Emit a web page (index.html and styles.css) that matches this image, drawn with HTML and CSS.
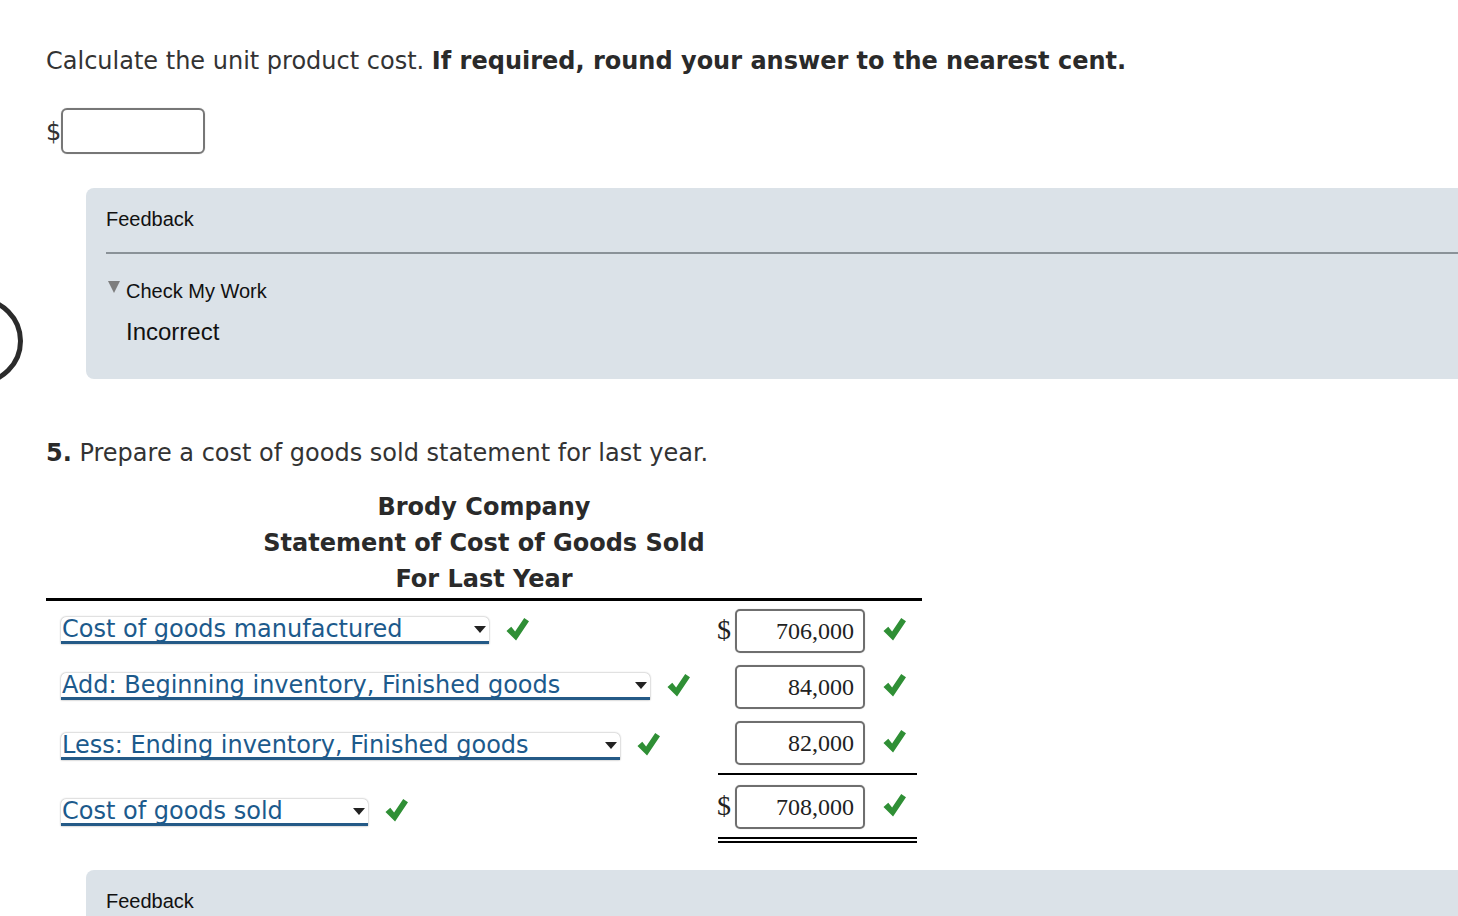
FILE: index.html
```html
<!DOCTYPE html>
<html>
<head>
<meta charset="utf-8">
<link rel="stylesheet" href="styles.css">
</head>
<body>
<div class="ring"></div>
<div class="page">
  <p class="question">Calculate the unit product cost. <b>If required, round your answer to the nearest cent.</b></p>
  <div class="answer-row"><span class="cur">$</span><span class="blank-input"></span></div>

  <div class="feedback">
    <div class="fb-title">Feedback</div>
    <div class="fb-rule"></div>
    <div class="fb-check"><span class="tri"></span>Check My Work</div>
    <div class="fb-result">Incorrect</div>
  </div>

  <p class="question q5"><b>5.</b> Prepare a cost of goods sold statement for last year.</p>
  <div class="stmt-head">
    <div>Brody Company</div>
    <div>Statement of Cost of Goods Sold</div>
    <div>For Last Year</div>
  </div>
  <div class="stmt">
    <div class="thick-rule"></div>
    <div class="row r1">
      <div class="label"><div class="select w1"><span>Cost of goods manufactured</span><i class="arrow"></i></div><svg class="check" viewBox="0 0 24 26"><path d="M0.5 14.5 L5.5 10 L9.5 15 L19 1 L24 4.5 L10.5 24.5 Z"/></svg></div>
      <div class="dollar">$</div>
      <div class="num">706,000</div>
      <div class="chk"><svg class="check" viewBox="0 0 24 26"><path d="M0.5 14.5 L5.5 10 L9.5 15 L19 1 L24 4.5 L10.5 24.5 Z"/></svg></div>
    </div>
    <div class="row r2">
      <div class="label"><div class="select w2"><span>Add: Beginning inventory, Finished goods</span><i class="arrow"></i></div><svg class="check" viewBox="0 0 24 26"><path d="M0.5 14.5 L5.5 10 L9.5 15 L19 1 L24 4.5 L10.5 24.5 Z"/></svg></div>
      <div class="dollar"></div>
      <div class="num">84,000</div>
      <div class="chk"><svg class="check" viewBox="0 0 24 26"><path d="M0.5 14.5 L5.5 10 L9.5 15 L19 1 L24 4.5 L10.5 24.5 Z"/></svg></div>
    </div>
    <div class="row r3">
      <div class="label"><div class="select w3"><span>Less: Ending inventory, Finished goods</span><i class="arrow"></i></div><svg class="check" viewBox="0 0 24 26"><path d="M0.5 14.5 L5.5 10 L9.5 15 L19 1 L24 4.5 L10.5 24.5 Z"/></svg></div>
      <div class="dollar"></div>
      <div class="num">82,000</div>
      <div class="chk"><svg class="check" viewBox="0 0 24 26"><path d="M0.5 14.5 L5.5 10 L9.5 15 L19 1 L24 4.5 L10.5 24.5 Z"/></svg></div>
    </div>
    <div class="sub-rule"></div>
    <div class="row r4">
      <div class="label"><div class="select w4"><span>Cost of goods sold</span><i class="arrow"></i></div><svg class="check" viewBox="0 0 24 26"><path d="M0.5 14.5 L5.5 10 L9.5 15 L19 1 L24 4.5 L10.5 24.5 Z"/></svg></div>
      <div class="dollar">$</div>
      <div class="num">708,000</div>
      <div class="chk"><svg class="check" viewBox="0 0 24 26"><path d="M0.5 14.5 L5.5 10 L9.5 15 L19 1 L24 4.5 L10.5 24.5 Z"/></svg></div>
    </div>
    <div class="double-rule"></div>
  </div>

  <div class="feedback fb2">
    <div class="fb-title">Feedback</div>
  </div>
</div>
</body>
</html>
```

FILE: styles.css
```css
html, body {
  margin: 0;
  padding: 0;
  background: #fff;
  overflow: hidden;
}
body {
  width: 1458px;
  height: 916px;
  position: relative;
  font-family: "DejaVu Sans", Verdana, sans-serif;
  color: #333;
}
.ring {
  position: absolute;
  left: -65px;
  top: 297px;
  width: 78px;
  height: 78px;
  border: 5px solid #2b2b2b;
  border-radius: 50%;
}
.page {
  padding: 43px 0 0 46px;
}
.question {
  margin: 0;
  font-size: 24px;
  line-height: 36px;
}
.question b {
  color: #2a2a2a;
}
.answer-row {
  margin-top: 29px;
  display: flex;
  align-items: center;
  height: 45px;
}
.cur {
  font-size: 24px;
  line-height: 32px;
  color: #333;
  width: 15px;
  margin-top: 3px;
}
.blank-input {
  display: block;
  box-sizing: border-box;
  width: 144px;
  height: 46px;
  border: 2px solid #777;
  border-radius: 6px;
  box-shadow: 0 0 1px rgba(0,0,0,0.3);
}
.feedback {
  margin: 35px 0 0 40px;
  background: #dbe2e8;
  border-radius: 8px 0 0 8px;
  padding: 19px 0 0 20px;
  height: 191px;
  box-sizing: border-box;
  font-family: "Liberation Sans", Arial, sans-serif;
  color: #111;
}
.fb-title {
  font-size: 20px;
  line-height: 24px;
}
.fb-rule {
  margin-top: 21px;
  height: 2px;
  background: #8a9298;
}
.fb-check {
  margin-top: 25px;
  font-size: 20px;
  line-height: 24px;
  display: flex;
  align-items: center;
}
.tri {
  display: inline-block;
  width: 0;
  height: 0;
  border-left: 6px solid transparent;
  border-right: 6px solid transparent;
  border-top: 12px solid #7d7d7d;
  margin: -8px 6px 0 2px;
}
.fb-result {
  margin: 14px 0 0 20px;
  font-size: 24px;
  line-height: 30px;
}
.q5 {
  margin-top: 56px;
}
.stmt-head {
  margin-top: 18px;
  width: 876px;
  text-align: center;
  font-weight: bold;
  font-size: 24px;
  line-height: 36px;
  color: #2a2a2a;
}
.stmt {
  width: 876px;
}
.thick-rule {
  margin-top: 1px;
  height: 3px;
  background: #000;
}
.row {
  display: grid;
  grid-template-columns: 672px 17px 130px 1fr;
  align-items: center;
  height: 44px;
  margin-top: 12px;
}
.stmt .thick-rule + .row {
  margin-top: 8px;
}
.label {
  display: flex;
  align-items: center;
  padding-left: 15px;
}
.select {
  position: relative;
  height: 24px;
  background: #fff;
  border-radius: 5px 5px 0 0;
  box-shadow: 0 0 2px rgba(0,0,0,0.45);
  border-bottom: 3px solid #245a87;
  display: flex;
  align-items: center;
}
.r1 .select, .r2 .select { margin-top: -1px; }
.r3 .select { margin-top: 7px; }
.r4 .select { margin-top: 11px; }
.select span {
  color: #1c5a8c;
  font-size: 24px;
  line-height: 24px;
  padding-left: 1px;
  white-space: nowrap;
}
.arrow {
  position: absolute;
  right: 3px;
  top: 9px;
  width: 0;
  height: 0;
  border-left: 6px solid transparent;
  border-right: 6px solid transparent;
  border-top: 7px solid #222;
}
.w1 { width: 428px; }
.w2 { width: 589px; }
.w3 { width: 559px; }
.w4 { width: 307px; }
.label .check {
  margin-left: 17px;
  margin-top: -4px;
}
.r3 .label .check { margin-top: 2px; }
.r4 .label .check { margin-top: 6px; }
.check {
  width: 23px;
  height: 25px;
  fill: #2f8f35;
}
.dollar {
  font-family: "Liberation Serif", "Times New Roman", serif;
  font-size: 28px;
  color: #222;
  margin-top: -2px;
  margin-left: -1px;
}
.num {
  height: 44px;
  box-sizing: border-box;
  border: 2px solid #6f6f6f;
  border-radius: 5px;
  box-shadow: 0 0 1px rgba(0,0,0,0.3);
  font-family: "Liberation Serif", "Times New Roman", serif;
  font-size: 24px;
  line-height: 40px;
  text-align: right;
  padding-right: 9px;
  color: #222;
}
.chk {
  padding-left: 18px;
  display: flex;
  align-items: center;
  margin-top: -4px;
}
.sub-rule {
  margin: 8px 5px 0 672px;
  height: 2px;
  background: #000;
}
.row.r4 {
  margin-top: 10px;
}
.double-rule {
  margin: 8px 5px 0 672px;
  height: 2px;
  border-bottom: 2px solid #000;
  border-top: 2px solid #000;
}
.fb2 {
  margin-top: 27px;
  height: 60px;
}
```
